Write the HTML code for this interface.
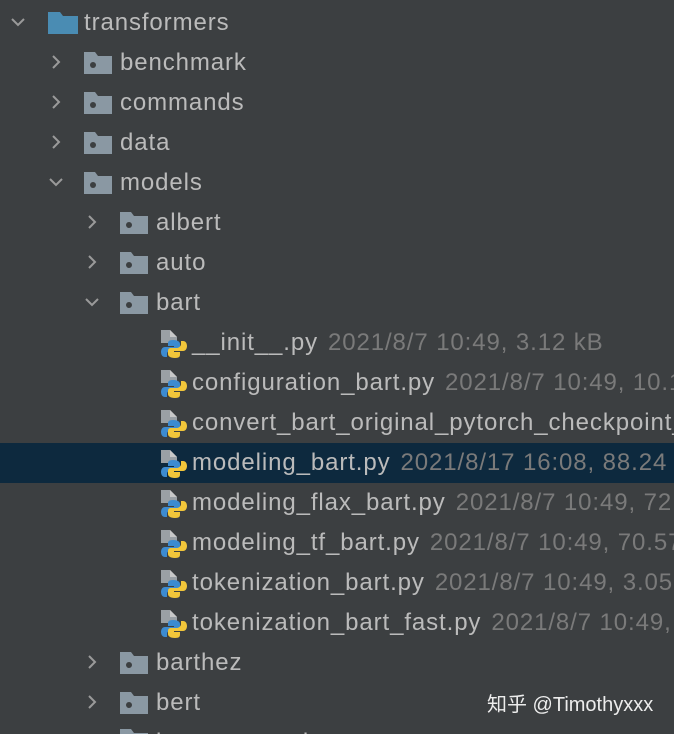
<!DOCTYPE html>
<html><head><meta charset="utf-8"><style>
html,body{margin:0;padding:0;}
body{width:674px;height:734px;background:#3c3f41;overflow:hidden;position:relative;font-family:"Liberation Sans","Noto Sans CJK SC",sans-serif;}
.row{position:absolute;left:0;width:674px;height:40px;white-space:nowrap;overflow:hidden;}
.sel{background:#0d293e;}
.arrow{position:absolute;top:12px;width:16px;height:16px;}
.ic{position:absolute;top:8px;}
.t{position:absolute;top:7px;font-size:24px;color:#bbbbbb;letter-spacing:0.9px;}
.m{color:#7a7a7a;margin-left:10px;}
.wm{position:absolute;left:487px;top:688px;font-size:20px;color:#ececec;}
</style></head><body>
<svg width="0" height="0" style="position:absolute">
<defs>
<symbol id="fold" viewBox="0 0 28 22"><path d="M0 0h11l3 4h14v18H0z" fill="#8a98a3"/><circle cx="9" cy="13" r="3" fill="#3c3f41"/></symbol>
<symbol id="foldb" viewBox="0 0 30 22"><path d="M0 0h12l3 4h15v18H0z" fill="#4a8cb3"/></symbol>
<symbol id="right" viewBox="0 0 16 16"><path d="M5 2l6 6-6 6" stroke="#9a9a9a" stroke-width="2" fill="none"/></symbol>
<symbol id="down" viewBox="0 0 16 16"><path d="M2 5l6 6 6-6" stroke="#9a9a9a" stroke-width="2" fill="none"/></symbol>
<symbol id="py" viewBox="0 0 28 30"><path d="M2 2h9l7 7v6H2z" fill="#9aa0a5"/><path d="M11 2v7h7z" fill="#c8c8c8"/><path d="M14 12c-5 0-5 2-5 4v2h6v1H6c-3 0-4 3-4 5s1 5 4 5h2v-3c0-2 2-4 4-4h6c2 0 3-1 3-3v-3c0-2-2-4-7-4z" fill="#3d8bd0"/><path d="M16 30c5 0 5-2 5-4v-2h-6v-1h9c3 0 4-3 4-5s-1-5-4-5h-2v3c0 2-2 4-4 4h-6c-2 0-3 1-3 3v3c0 2 2 4 7 4z" fill="#f2c63a"/></symbol>
</defs></svg>

<div class="row" style="top:2px"><svg class="arrow" style="left:10px"><use href="#down"/></svg><svg class="ic" style="left:48px;top:10px" width="30" height="22"><use href="#foldb"/></svg><span class="t" style="left:84px">transformers</span></div>
<div class="row" style="top:42px"><svg class="arrow" style="left:48px"><use href="#right"/></svg><svg class="ic" style="left:84px;top:10px" width="28" height="22"><use href="#fold"/></svg><span class="t" style="left:120px">benchmark</span></div>
<div class="row" style="top:82px"><svg class="arrow" style="left:48px"><use href="#right"/></svg><svg class="ic" style="left:84px;top:10px" width="28" height="22"><use href="#fold"/></svg><span class="t" style="left:120px">commands</span></div>
<div class="row" style="top:122px"><svg class="arrow" style="left:48px"><use href="#right"/></svg><svg class="ic" style="left:84px;top:10px" width="28" height="22"><use href="#fold"/></svg><span class="t" style="left:120px">data</span></div>
<div class="row" style="top:162px"><svg class="arrow" style="left:48px"><use href="#down"/></svg><svg class="ic" style="left:84px;top:10px" width="28" height="22"><use href="#fold"/></svg><span class="t" style="left:120px">models</span></div>
<div class="row" style="top:202px"><svg class="arrow" style="left:84px"><use href="#right"/></svg><svg class="ic" style="left:120px;top:10px" width="28" height="22"><use href="#fold"/></svg><span class="t" style="left:156px">albert</span></div>
<div class="row" style="top:242px"><svg class="arrow" style="left:84px"><use href="#right"/></svg><svg class="ic" style="left:120px;top:10px" width="28" height="22"><use href="#fold"/></svg><span class="t" style="left:156px">auto</span></div>
<div class="row" style="top:282px"><svg class="arrow" style="left:84px"><use href="#down"/></svg><svg class="ic" style="left:120px;top:10px" width="28" height="22"><use href="#fold"/></svg><span class="t" style="left:156px">bart</span></div>
<div class="row" style="top:322px"><svg class="ic" style="left:159px;top:6px" width="28" height="30"><use href="#py"/></svg><span class="t" style="left:192px">__init__.py<span class="m">2021/8/7 10:49, 3.12 kB</span></span></div>
<div class="row" style="top:362px"><svg class="ic" style="left:159px;top:6px" width="28" height="30"><use href="#py"/></svg><span class="t" style="left:192px">configuration_bart.py<span class="m">2021/8/7 10:49, 10.11 kB</span></span></div>
<div class="row" style="top:402px"><svg class="ic" style="left:159px;top:6px" width="28" height="30"><use href="#py"/></svg><span class="t" style="left:192px">convert_bart_original_pytorch_checkpoint_to_pytorch.py</span></div>
<div class="row sel" style="top:443px"><svg class="ic" style="left:159px;top:5px" width="28" height="30"><use href="#py"/></svg><span class="t" style="left:192px;top:6px">modeling_bart.py<span class="m">2021/8/17 16:08, 88.24 kB</span></span></div>
<div class="row" style="top:482px"><svg class="ic" style="left:159px;top:6px" width="28" height="30"><use href="#py"/></svg><span class="t" style="left:192px">modeling_flax_bart.py<span class="m">2021/8/7 10:49, 72.35 kB</span></span></div>
<div class="row" style="top:522px"><svg class="ic" style="left:159px;top:6px" width="28" height="30"><use href="#py"/></svg><span class="t" style="left:192px">modeling_tf_bart.py<span class="m">2021/8/7 10:49, 70.57 kB</span></span></div>
<div class="row" style="top:562px"><svg class="ic" style="left:159px;top:6px" width="28" height="30"><use href="#py"/></svg><span class="t" style="left:192px">tokenization_bart.py<span class="m">2021/8/7 10:49, 3.05 kB</span></span></div>
<div class="row" style="top:602px"><svg class="ic" style="left:159px;top:6px" width="28" height="30"><use href="#py"/></svg><span class="t" style="left:192px">tokenization_bart_fast.py<span class="m">2021/8/7 10:49, 3.11 kB</span></span></div>
<div class="row" style="top:642px"><svg class="arrow" style="left:84px"><use href="#right"/></svg><svg class="ic" style="left:120px;top:10px" width="28" height="22"><use href="#fold"/></svg><span class="t" style="left:156px">barthez</span></div>
<div class="row" style="top:682px"><svg class="arrow" style="left:84px"><use href="#right"/></svg><svg class="ic" style="left:120px;top:10px" width="28" height="22"><use href="#fold"/></svg><span class="t" style="left:156px">bert</span></div>
<div class="row" style="top:722px;height:12px"><svg class="arrow" style="left:84px"><use href="#right"/></svg><svg class="ic" style="left:120px;top:7px" width="28" height="22"><use href="#fold"/></svg><span class="t" style="left:156px">bert_generation</span></div>
<div class="wm">知乎 @Timothyxxx</div>
</body></html>
